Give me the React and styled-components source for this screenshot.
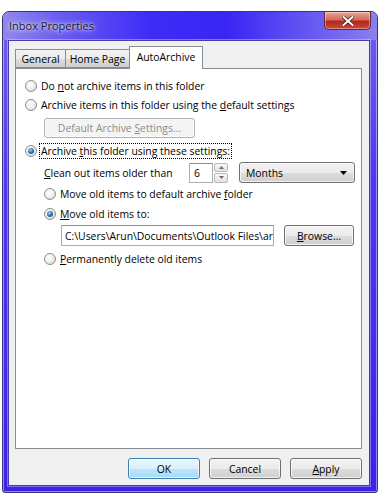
import React from "react";
import styled, { createGlobalStyle } from "styled-components";

const FS = "10.4px";

const GlobalStyle = createGlobalStyle`
  html, body {
    margin: 0;
    padding: 0;
    background: #ffffff;
  }
  body {
    font-family: "Open Sans", "Liberation Sans", sans-serif;
    font-size: ${FS};
    color: #000;
  }
`;

const Window = styled.div`
  margin: 11px 0 0 2px;
  width: 376px;
  height: 482px;
  box-sizing: border-box;
  border: 1px solid #3a3470;
  border-radius: 7px 7px 3px 3px;
  background: linear-gradient(180deg, #6f62ee 0%, #4d38f0 35%, #3a22ec 100%);
  display: flex;
  flex-direction: column;
  overflow: hidden;
  box-shadow: inset 0 0 0 1px rgba(255, 255, 255, 0.45);
`;

const TitleBar = styled.div`
  height: 28px;
  display: flex;
  align-items: flex-start;
  justify-content: space-between;
  padding: 0 6px 0 6px;
  background: linear-gradient(
    90deg,
    #9088ec 0%,
    #6a5cf0 15%,
    #3d2bf6 40%,
    #3a26f4 60%,
    #6c5ef1 85%,
    #8a80ec 100%
  );
`;

const Title = styled.span`
  margin-top: 6px;
  font-size: 11px;
  color: #1a1a1a;
  text-shadow: 0 0 6px rgba(255, 255, 255, 0.9), 0 0 3px rgba(255, 255, 255, 0.9);
`;

const CloseButton = styled.div`
  width: 47px;
  height: 18px;
  box-sizing: border-box;
  border: 1px solid #5a2a40;
  border-top: none;
  border-radius: 0 0 5px 5px;
  background: linear-gradient(
    180deg,
    #e8a89a 0%,
    #d46a58 45%,
    #b3281c 55%,
    #c84a3a 100%
  );
  display: flex;
  align-items: center;
  justify-content: center;
  box-shadow: inset 0 0 0 1px rgba(255, 255, 255, 0.4);
`;

const Client = styled.div`
  flex: 1;
  margin: 0 7px 6px 5px;
  background: #f0f0f0;
  border: 1px solid #4a3ab0;
  box-shadow: 0 0 0 1px rgba(255, 255, 255, 0.35);
  display: flex;
  flex-direction: column;
  padding: 5px 7px 0 6px;
`;

const TabStrip = styled.div`
  display: flex;
  align-items: flex-end;
  height: 22px;
  position: relative;
  z-index: 1;
`;

const Tab = styled.div`
  box-sizing: border-box;
  height: ${(p) => (p.active ? "23px" : "19px")};
  margin-bottom: ${(p) => (p.active ? "-1px" : "0")};
  width: ${(p) => p.w}px;
  margin-left: ${(p) => (p.active ? "-1px" : "0")};
  padding-bottom: ${(p) => (p.active ? "3px" : "0")};
  border: 1px solid #898c95;
  border-bottom: ${(p) => (p.active ? "none" : "1px solid #898c95")};
  border-left: ${(p) => (p.first || p.active ? "1px solid #898c95" : "none")};
  background: ${(p) =>
    p.active ? "#ffffff" : "linear-gradient(180deg, #f2f2f2 0%, #ebebeb 50%, #dddddd 51%, #cfcfcf 100%)"};
  display: flex;
  align-items: center;
  justify-content: center;
  white-space: nowrap;
`;

const Panel = styled.div`
  height: 381px;
  box-sizing: border-box;
  background: #ffffff;
  border: 1px solid #898c95;
  padding: 8px 0 0 9px;
  display: flex;
  flex-direction: column;
`;

const Row = styled.div`
  display: flex;
  align-items: center;
  height: ${(p) => p.h || 18}px;
  margin-top: ${(p) => p.mt || 0}px;
  padding-left: ${(p) => p.indent || 0}px;
  white-space: nowrap;
`;

const Radio = styled.span`
  flex: none;
  width: 12px;
  height: 12px;
  box-sizing: border-box;
  border-radius: 50%;
  border: 1px solid #8e8f8f;
  background: radial-gradient(circle at 40% 35%, #ffffff 0%, #f0f0f0 45%, #cfcfcf 100%);
  display: flex;
  align-items: center;
  justify-content: center;
  margin-right: 4px;
  &::after {
    content: "";
    display: ${(p) => (p.checked ? "block" : "none")};
    width: 6px;
    height: 6px;
    border-radius: 50%;
    background: radial-gradient(circle at 40% 35%, #a9d6f5 0%, #2f7ab8 45%, #0d3a6a 100%);
  }
`;

const Label = styled.span`
  padding: 0 1px;
  border: 1px dotted ${(p) => (p.focused ? "#000" : "transparent")};
  margin-left: -2px;
`;

const Key = styled.u`
  text-decoration: underline;
  text-underline-offset: 1px;
`;

const Button = styled.div`
  box-sizing: border-box;
  width: ${(p) => p.w}px;
  height: ${(p) => p.h || 21}px;
  border: 1px solid ${(p) => (p.primary ? "#3c7fb1" : p.disabled ? "#adb2b5" : "#707070")};
  border-radius: 3px;
  background: ${(p) =>
    p.disabled
      ? "#f4f4f4"
      : p.primary
      ? "linear-gradient(180deg, #eaf6fd 0%, #d9f0fc 50%, #bee6fd 51%, #a7d9f5 100%)"
      : "linear-gradient(180deg, #f2f2f2 0%, #ebebeb 50%, #dddddd 51%, #cfcfcf 100%)"};
  box-shadow: inset 0 0 0 1px rgba(255, 255, 255, 0.7);
  color: ${(p) => (p.disabled ? "#8d8d8d" : "#000")};
  display: flex;
  align-items: center;
  justify-content: center;
  flex: none;
`;

const FieldLabel = styled.span`
  width: 145px;
  flex: none;
`;

const SpinBox = styled.div`
  display: flex;
  height: 20px;
`;

const SpinField = styled.div`
  width: 24px;
  box-sizing: border-box;
  border: 1px solid #abadb3;
  border-top-color: #8e8f8f;
  background: #fff;
  padding-left: 4px;
  display: flex;
  align-items: center;
`;

const SpinButtons = styled.div`
  width: 14px;
  display: flex;
  flex-direction: column;
  gap: 1px;
  margin-left: 1px;
`;

const SpinButton = styled.div`
  flex: 1;
  border: 1px solid #b6b9bd;
  border-radius: 2px;
  background: linear-gradient(180deg, #f7f7f7, #e2e2e2);
  display: flex;
  align-items: center;
  justify-content: center;
`;

const Combo = styled.div`
  box-sizing: border-box;
  width: 116px;
  height: 21px;
  margin-left: 11px;
  border: 1px solid #707070;
  border-radius: 3px;
  background: linear-gradient(180deg, #f2f2f2 0%, #ebebeb 50%, #dddddd 51%, #cfcfcf 100%);
  box-shadow: inset 0 0 0 1px rgba(255, 255, 255, 0.7);
  display: flex;
  align-items: center;
  justify-content: space-between;
  padding: 0 7px 0 6px;
`;

const PathField = styled.div`
  box-sizing: border-box;
  width: 213px;
  height: 21px;
  border: 1px solid #abadb3;
  border-top-color: #8e8f8f;
  background: #fff;
  padding-left: 3px;
  display: flex;
  align-items: center;
  overflow: hidden;
  margin-right: 10px;
  flex: none;
`;

const Footer = styled.div`
  display: flex;
  justify-content: flex-end;
  gap: 9px;
  padding-top: 9px;
`;

const Arrow = ({ up }) => (
  <svg width="5" height="3" viewBox="0 0 5 3">
    <path d={up ? "M0 3 H5 L2.5 0 Z" : "M0 0 H5 L2.5 3 Z"} fill="#6b6b6b" />
  </svg>
);

const App = () => (
  <>
    <GlobalStyle />
    <Window>
      <TitleBar>
        <Title>Inbox Properties</Title>
        <CloseButton>
          <svg width="12" height="10" viewBox="0 0 12 10">
            <path
              d="M1.5 1 L10.5 9 M10.5 1 L1.5 9"
              stroke="#3a1a1a"
              strokeWidth="3.4"
              strokeLinecap="square"
            />
            <path
              d="M1.5 1 L10.5 9 M10.5 1 L1.5 9"
              stroke="#ffffff"
              strokeWidth="2"
              strokeLinecap="square"
            />
          </svg>
        </CloseButton>
      </TitleBar>
      <Client>
        <TabStrip>
          <Tab first w={51}>General</Tab>
          <Tab w={64}>Home Page</Tab>
          <Tab active w={74}>AutoArchive</Tab>
        </TabStrip>
        <Panel>
          <Row>
            <Radio />
            <Label>
              Do <Key>n</Key>ot archive items in this folder
            </Label>
          </Row>
          <Row mt={1}>
            <Radio />
            <Label>
              Archive items in this folder using the <Key>d</Key>efault settings
            </Label>
          </Row>
          <Row h={20} mt={4} indent={19}>
            <Button w={151} h={20} disabled>
              <span>
                Default Archive <Key>S</Key>ettings...
              </span>
            </Button>
          </Row>
          <Row mt={4}>
            <Radio checked />
            <Label focused>
              Archive <Key>t</Key>his folder using these settings:
            </Label>
          </Row>
          <Row h={21} mt={2} indent={19}>
            <FieldLabel>
              <Key>C</Key>lean out items older than
            </FieldLabel>
            <SpinBox>
              <SpinField>6</SpinField>
              <SpinButtons>
                <SpinButton>
                  <Arrow up />
                </SpinButton>
                <SpinButton>
                  <Arrow />
                </SpinButton>
              </SpinButtons>
            </SpinBox>
            <Combo>
              <span>Months</span>
              <svg width="7" height="4" viewBox="0 0 7 4">
                <path d="M0 0 H7 L3.5 4 Z" fill="#000" />
              </svg>
            </Combo>
          </Row>
          <Row mt={2} indent={19}>
            <Radio />
            <Label>
              Move old items to default archive <Key>f</Key>older
            </Label>
          </Row>
          <Row mt={2} indent={19}>
            <Radio checked />
            <Label>
              <Key>M</Key>ove old items to:
            </Label>
          </Row>
          <Row h={21} mt={2} indent={36}>
            <PathField>C:\Users\Arun\Documents\Outlook Files\arc</PathField>
            <Button w={70} h={21}>
              <span>
                <Key>B</Key>rowse...
              </span>
            </Button>
          </Row>
          <Row mt={4} indent={19}>
            <Radio />
            <Label>
              <Key>P</Key>ermanently delete old items
            </Label>
          </Row>
        </Panel>
        <Footer>
          <Button w={72} primary>
            OK
          </Button>
          <Button w={72}>Cancel</Button>
          <Button w={72}>
            <span>
              <Key>A</Key>pply
            </span>
          </Button>
        </Footer>
      </Client>
    </Window>
  </>
);

export default App;
